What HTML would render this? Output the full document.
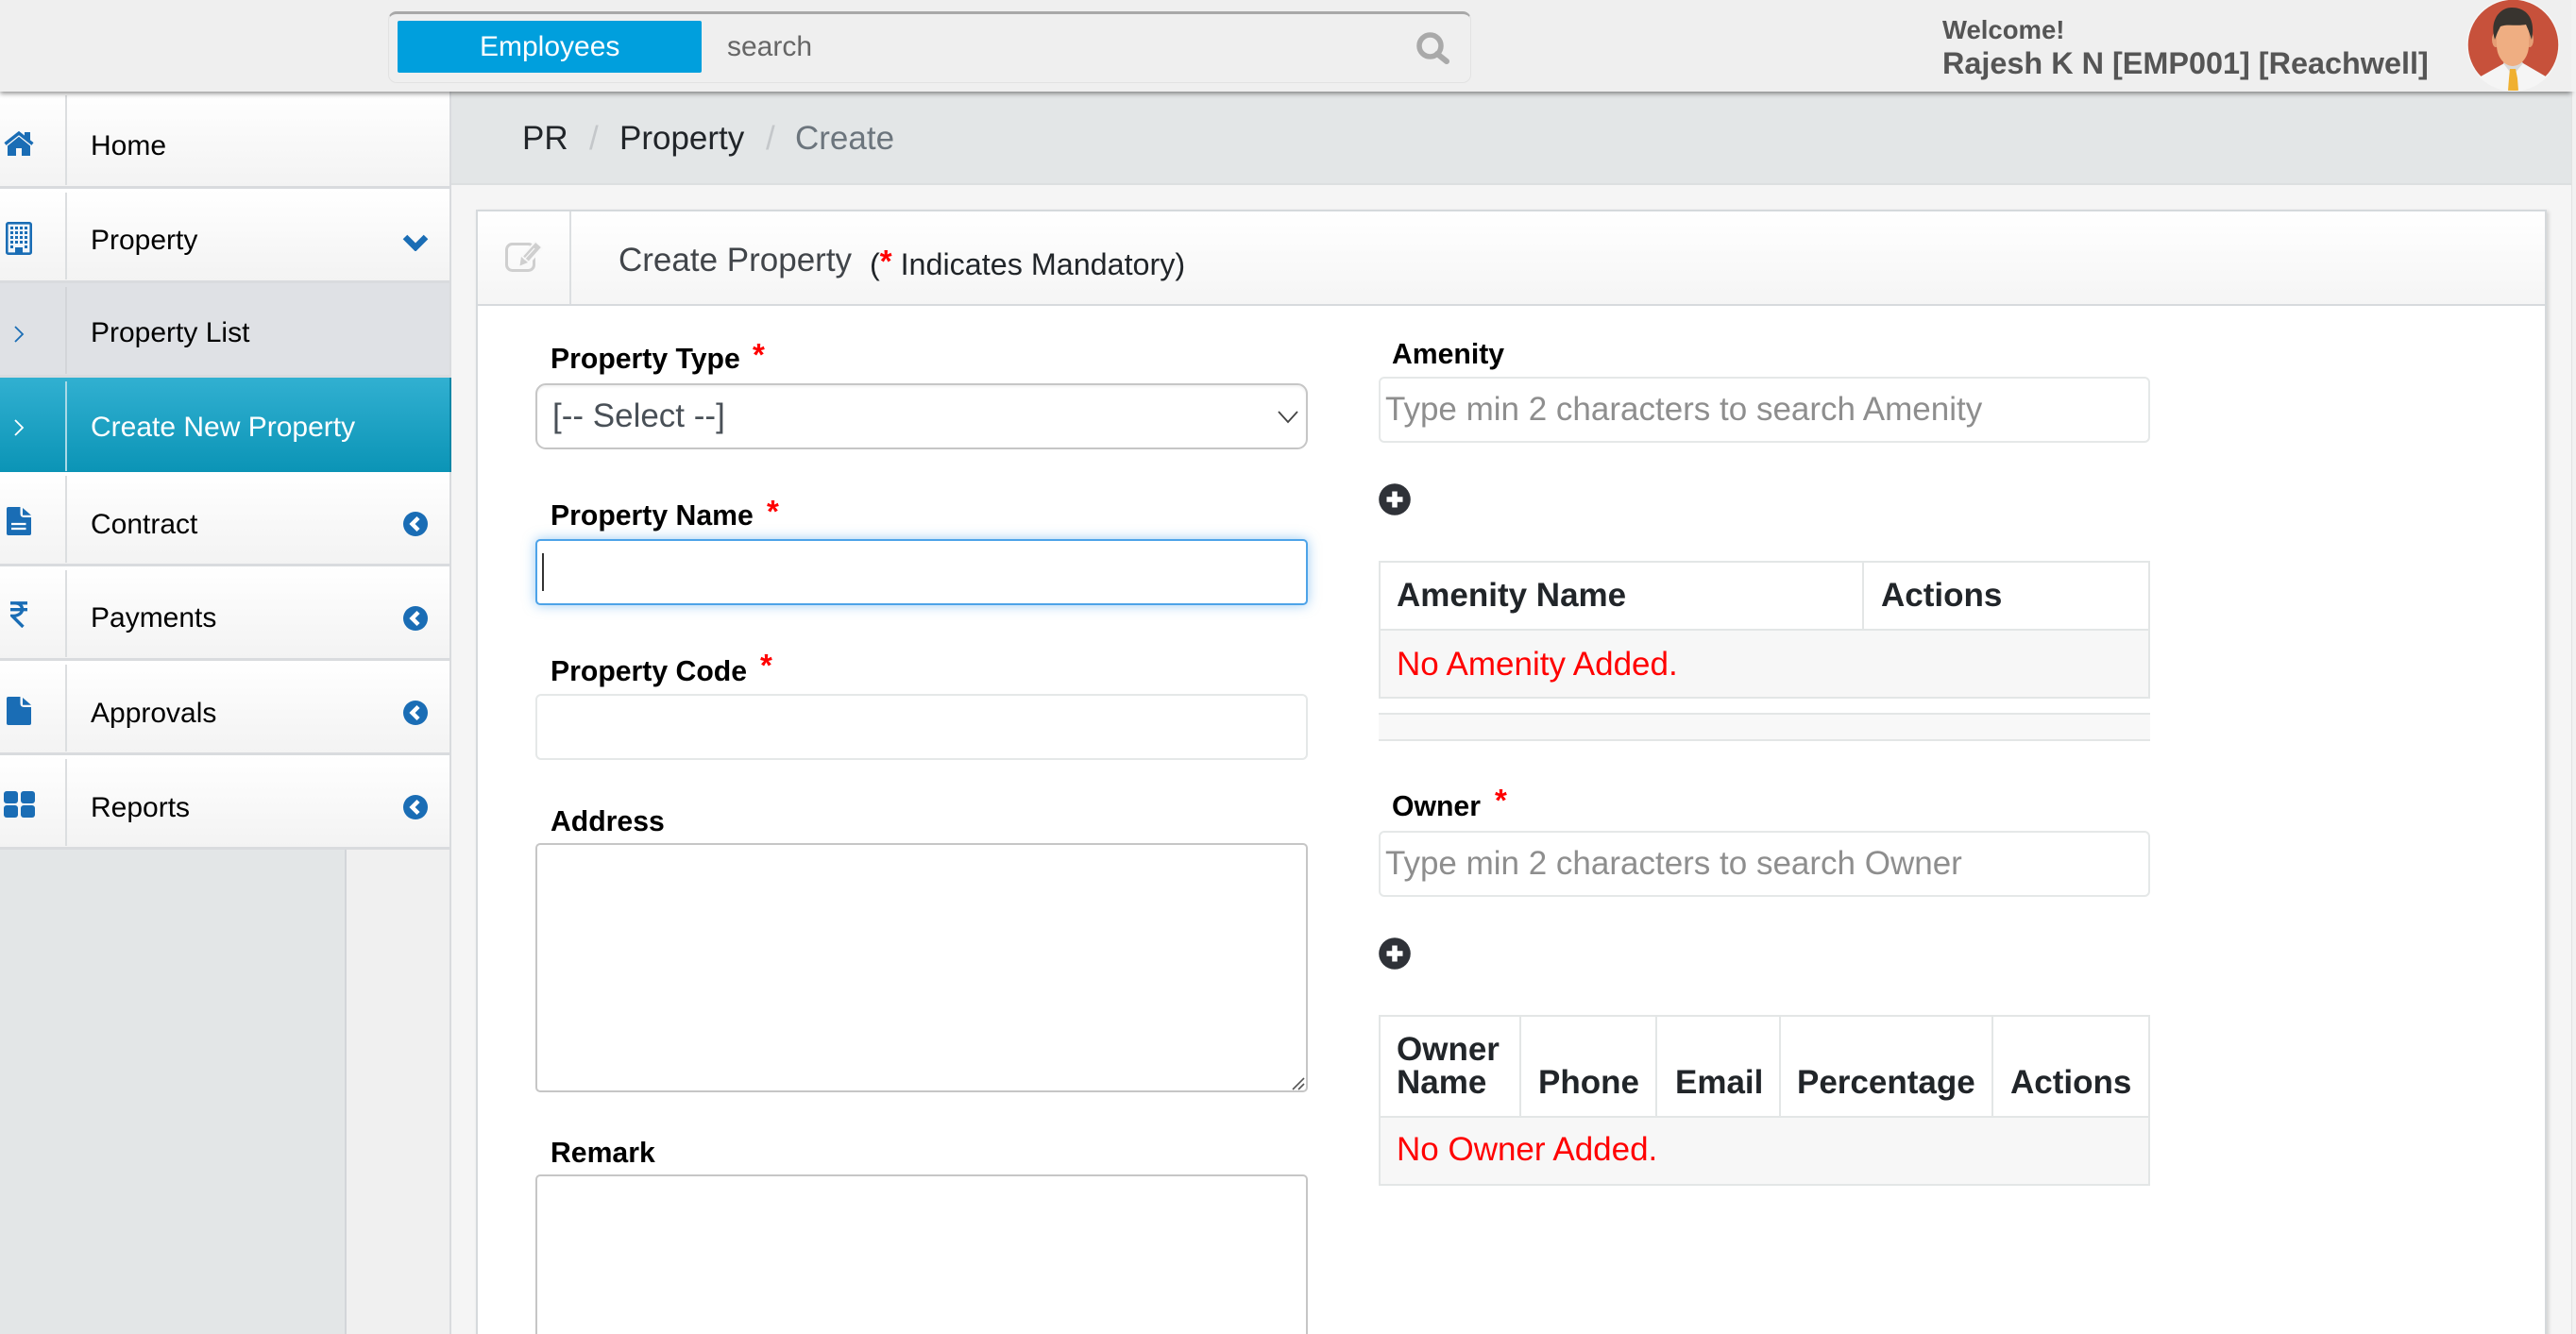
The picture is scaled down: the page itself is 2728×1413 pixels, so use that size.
<!DOCTYPE html>
<html lang="en">
<head>
<meta charset="utf-8">
<title>Create Property</title>
<style>
html,body{margin:0;padding:0;width:2728px;height:1413px;overflow:hidden;background:#f5f5f5;font-family:"Liberation Sans",Arial,sans-serif}
*{box-sizing:border-box}
#page{position:relative;width:2728px;height:1413px;overflow:hidden;background:#f5f5f5}
.a{position:absolute}
.t{position:absolute;white-space:nowrap;line-height:0}
.f30{font-size:30px;margin-top:-10.4px}
.f35{font-size:35px;margin-top:-11px}
.bc{font-size:35px;margin-top:-10.6px}
.lb{font-size:30.2px;margin-top:-9.5px;font-weight:700;color:#000}
.th{font-size:35px;margin-top:-11.4px;font-weight:700;color:#212529}
.star{position:absolute;white-space:nowrap;line-height:0;color:#f00;font-size:33px;margin-top:-9.5px;font-weight:700}
.ph{color:#8e8e8e}
.item{position:absolute;left:0;width:478px;height:100px;background:linear-gradient(#fff,#f3f3f3);border-bottom:3px solid #d9dbde;border-right:2px solid #d9dbde}
.item i{position:absolute;left:69px;top:4px;bottom:1px;width:2px;background:#dcdee0}
.in{position:absolute;background:#fff;border:2px solid #e5e8e8;border-radius:6px}
.tx{position:absolute;background:#fff;border:2px solid #c6c6c6;border-radius:5px}
.c{position:absolute;background:#e3e6e6}
svg{position:absolute;display:block}
</style>
</head>
<body>
<div id="page">

<!-- content background -->
<div class="a" style="left:478px;top:97px;width:2245px;height:99px;background:#e3e6e7;border-bottom:2px solid #dcdfe0"></div>
<div class="t bc" style="left:553px;top:158px;color:#212529">PR</div>
<div class="t bc" style="left:624px;top:158px;color:#c4c7ca">/</div>
<div class="t bc" style="left:656px;top:158px;color:#212529">Property</div>
<div class="t bc" style="left:811px;top:158px;color:#c4c7ca">/</div>
<div class="t bc" style="left:842px;top:158px;color:#6c757d">Create</div>
<div class="a" style="left:2723px;top:97px;width:5px;height:1316px;background:#f2f2f2;border-left:1px solid #e2e2e2"></div>

<!-- panel -->
<div class="a" style="left:504px;top:222px;width:2193px;height:1200px;background:#fff;border:2px solid #d5d9dc;box-shadow:2px 2px 4px rgba(0,0,0,.15)"></div>
<div class="a" style="left:506px;top:224px;width:2189px;height:100px;background:linear-gradient(#fff,#f5f5f5);border-bottom:2px solid #d7dadd"></div>
<div class="a" style="left:603px;top:224px;width:2px;height:98px;background:#dcdfe1"></div>
<svg style="left:533px;top:255px" width="44" height="34" viewBox="0 0 44 34">
  <rect x="3.5" y="3.5" width="29" height="28" rx="6" fill="none" stroke="#cfcfcf" stroke-width="3"/>
  <path d="M22 22 L38 4" stroke="#f9f9f9" stroke-width="12"/>
  <path d="M24 19 L37 4.5" stroke="#cfcfcf" stroke-width="7.5"/>
  <path d="M17.5 26.5 L19 17 L26 23 Z" fill="#cfcfcf"/>
  <path d="M22 20 L33 8" stroke="#f9f9f9" stroke-width="1.2"/>
</svg>
<div class="t f35" style="left:655px;top:287px;color:#41454a">Create Property</div>
<div class="t" style="left:921px;top:290px;font-size:32.3px;margin-top:-10.2px;color:#212529">(<span style="color:#f00;font-size:33px;font-weight:700;position:relative;top:-3px">*</span> Indicates Mandatory)</div>

<!-- left form column -->
<div class="t lb" style="left:583px;top:390px">Property Type</div>
<div class="star" style="left:797px;top:385px">*</div>
<div class="tx" style="left:567px;top:406px;width:818px;height:70px;border-radius:11px;box-shadow:inset 0 2px 2px rgba(0,0,0,.05)"></div>
<div class="t f35" style="left:585px;top:452px;color:#495057">[-- Select --]</div>
<svg style="left:1352px;top:434px" width="24" height="15" viewBox="0 0 24 15"><path d="M2 2 L12 13 L22 2" fill="none" stroke="#444" stroke-width="1.8"/></svg>

<div class="t lb" style="left:583px;top:556px">Property Name</div>
<div class="star" style="left:812px;top:551px">*</div>
<div class="a" style="left:567px;top:571px;width:818px;height:70px;background:#fff;border:2px solid #4da3e8;border-radius:5px;box-shadow:0 0 13px rgba(77,163,232,.55)"></div>
<div class="a" style="left:574px;top:586px;width:2px;height:40px;background:#333"></div>

<div class="t lb" style="left:583px;top:721px">Property Code</div>
<div class="star" style="left:805px;top:714px">*</div>
<div class="in" style="left:567px;top:735px;width:818px;height:70px"></div>

<div class="t lb" style="left:583px;top:880px">Address</div>
<div class="tx" style="left:567px;top:893px;width:818px;height:264px"></div>
<svg style="left:1366px;top:1139px" width="17" height="17" viewBox="0 0 17 17"><path d="M3 15 L15 3 M9 15 L15 9" stroke="#555" stroke-width="1.6"/></svg>

<div class="t lb" style="left:583px;top:1231px">Remark</div>
<div class="tx" style="left:567px;top:1244px;width:818px;height:200px"></div>

<!-- right column: amenity -->
<div class="t lb" style="left:1474px;top:385px">Amenity</div>
<div class="in" style="left:1460px;top:399px;width:817px;height:70px"></div>
<div class="t f35 ph" style="left:1467px;top:445px">Type min 2 characters to search Amenity</div>
<svg style="left:1460px;top:512px" width="34" height="34" viewBox="0 0 34 34"><circle cx="17" cy="17" r="16.8" fill="#2f3238"/><path d="M17 8.5 V25.5 M8.5 17 H25.5" stroke="#fff" stroke-width="5.5"/></svg>

<div class="a" style="left:1460px;top:594px;width:817px;height:146px;background:#fff;border:2px solid #e3e6e6"></div>
<div class="a" style="left:1462px;top:668px;width:813px;height:70px;background:#f7f7f7"></div>
<div class="c" style="left:1462px;top:666px;width:813px;height:2px"></div>
<div class="c" style="left:1972px;top:596px;width:2px;height:70px"></div>
<div class="t th" style="left:1479px;top:642px">Amenity Name</div>
<div class="t th" style="left:1992px;top:642px">Actions</div>
<div class="t f35" style="left:1479px;top:715px;color:#f00">No Amenity Added.</div>
<div class="a" style="left:1460px;top:755px;width:817px;height:30px;background:#f8f8f8;border-top:2px solid #e3e6e6;border-bottom:2px solid #e3e6e6"></div>

<!-- right column: owner -->
<div class="t lb" style="left:1474px;top:864px">Owner</div>
<div class="star" style="left:1583px;top:857px">*</div>
<div class="in" style="left:1460px;top:880px;width:817px;height:70px"></div>
<div class="t f35 ph" style="left:1467px;top:926px">Type min 2 characters to search Owner</div>
<svg style="left:1460px;top:993px" width="34" height="34" viewBox="0 0 34 34"><circle cx="17" cy="17" r="16.8" fill="#2f3238"/><path d="M17 8.5 V25.5 M8.5 17 H25.5" stroke="#fff" stroke-width="5.5"/></svg>

<div class="a" style="left:1460px;top:1075px;width:817px;height:181px;background:#fff;border:2px solid #e3e6e6"></div>
<div class="a" style="left:1462px;top:1184px;width:813px;height:70px;background:#f7f7f7"></div>
<div class="c" style="left:1462px;top:1182px;width:813px;height:2px"></div>
<div class="c" style="left:1609px;top:1077px;width:2px;height:105px"></div>
<div class="c" style="left:1753px;top:1077px;width:2px;height:105px"></div>
<div class="c" style="left:1884px;top:1077px;width:2px;height:105px"></div>
<div class="c" style="left:2109px;top:1077px;width:2px;height:105px"></div>
<div class="t th" style="left:1479px;top:1123px">Owner</div>
<div class="t th" style="left:1479px;top:1158px">Name</div>
<div class="t th" style="left:1629px;top:1158px">Phone</div>
<div class="t th" style="left:1774px;top:1158px">Email</div>
<div class="t th" style="left:1903px;top:1158px">Percentage</div>
<div class="t th" style="left:2129px;top:1158px">Actions</div>
<div class="t f35" style="left:1479px;top:1229px;color:#f00">No Owner Added.</div>

<!-- sidebar -->
<div class="a" style="left:0;top:97px;width:478px;height:1316px;background:#f0f0f0;border-right:2px solid #d9dbde"></div>
<div class="a" style="left:0;top:900px;width:367px;height:513px;background:#e3e6e7;border-right:2px solid #d3d6d9"></div>

<div class="item" style="top:97px;height:103px"><i></i></div>
<div class="item" style="top:200px"><i></i></div>
<div class="item" style="top:300px;background:#dfe1e5"><i style="background:#d3d5d9"></i></div>
<div class="item" style="top:400px;background:linear-gradient(#31b0d1,#0b94b6);border-bottom:none;border-right:2px solid #0e86a6"><i style="background:#a9d9e6"></i></div>
<div class="item" style="top:500px"><i></i></div>
<div class="item" style="top:600px"><i></i></div>
<div class="item" style="top:700px"><i></i></div>
<div class="item" style="top:800px"><i></i></div>

<div class="t f30" style="left:96px;top:165px;color:#000">Home</div>
<div class="t f30" style="left:96px;top:265px;color:#000">Property</div>
<div class="t f30" style="left:96px;top:363px;color:#000">Property List</div>
<div class="t f30" style="left:96px;top:463px;color:#fff">Create New Property</div>
<div class="t f30" style="left:96px;top:566px;color:#000">Contract</div>
<div class="t f30" style="left:96px;top:665px;color:#000">Payments</div>
<div class="t f30" style="left:96px;top:766px;color:#000">Approvals</div>
<div class="t f30" style="left:96px;top:866px;color:#000">Reports</div>

<!-- sidebar icons -->
<svg style="left:4px;top:139px" width="32" height="26" viewBox="0 0 32 26" fill="#1a6db5">
  <path d="M1.5 13.5 L16 2 L30.5 13.5" fill="none" stroke="#1a6db5" stroke-width="3.4"/>
  <rect x="22" y="1" width="6" height="8"/>
  <path d="M4 15.5 L16 5.8 L28 15.5 V26 H19 V18 H13 V26 H4 Z"/>
</svg>
<svg style="left:6px;top:235px" width="28" height="35" viewBox="0 0 28 35">
  <rect x="1.3" y="1.3" width="25.4" height="32.4" rx="1.5" fill="#f2f6fa" stroke="#1a6db5" stroke-width="2.6"/>
  <g fill="#1a6db5">
    <rect x="5" y="5" width="3" height="3"/><rect x="10" y="5" width="3" height="3"/><rect x="15" y="5" width="3" height="3"/><rect x="20" y="5" width="3" height="3"/>
    <rect x="5" y="10" width="3" height="3"/><rect x="10" y="10" width="3" height="3"/><rect x="15" y="10" width="3" height="3"/><rect x="20" y="10" width="3" height="3"/>
    <rect x="5" y="15" width="3" height="3"/><rect x="10" y="15" width="3" height="3"/><rect x="15" y="15" width="3" height="3"/><rect x="20" y="15" width="3" height="3"/>
    <rect x="5" y="20" width="3" height="3"/><rect x="10" y="20" width="3" height="3"/><rect x="15" y="20" width="3" height="3"/><rect x="20" y="20" width="3" height="3"/>
    <rect x="5" y="25" width="3" height="3"/><rect x="20" y="25" width="3" height="3"/>
    <rect x="10" y="27" width="8" height="8"/>
  </g>
</svg>
<svg style="left:426px;top:248px" width="28" height="18" viewBox="0 0 28 18"><path d="M3 3 L14 14 L25 3" fill="none" stroke="#1a6db5" stroke-width="6.5"/></svg>
<svg style="left:14px;top:345px" width="12" height="18" viewBox="0 0 12 18"><path d="M2 1 L10 9 L2 17" fill="none" stroke="#1a6db5" stroke-width="1.8"/></svg>
<svg style="left:14px;top:444px" width="12" height="18" viewBox="0 0 12 18"><path d="M2 1 L10 9 L2 17" fill="none" stroke="#fff" stroke-width="1.8"/></svg>
<svg style="left:7px;top:537px" width="26" height="30" viewBox="0 0 26 30" fill="#1a6db5">
  <path d="M2 0 H14.5 V7 Q14.5 11 18.5 11 H26 V28 A2 2 0 0 1 24 30 H2 A2 2 0 0 1 0 28 V2 A2 2 0 0 1 2 0 Z"/>
  <path d="M17 1 L26 8.7 H17 Z"/>
  <path d="M5 18 H20.5 M5 23 H20.5" stroke="#fff" stroke-width="2.2"/>
</svg>
<svg style="left:11px;top:637px" width="18" height="28" viewBox="0 0 18 28"><path d="M0 1.8 H18 M0 8.7 H18 M2 1.8 H5 C10 1.8 12.5 5 12.5 8.5 C12.5 12 9 15.5 2 15.5 L13.5 27" fill="none" stroke="#1a6db5" stroke-width="3.4"/></svg>
<svg style="left:7px;top:738px" width="26" height="30" viewBox="0 0 26 30" fill="#1a6db5">
  <path d="M2 0 H14.5 V7 Q14.5 11 18.5 11 H26 V28 A2 2 0 0 1 24 30 H2 A2 2 0 0 1 0 28 V2 A2 2 0 0 1 2 0 Z"/>
  <path d="M17 1 L26 8.7 H17 Z"/>
</svg>
<svg style="left:4px;top:838px" width="33" height="28" viewBox="0 0 33 28" fill="#1a6db5">
  <rect x="0" y="0" width="15" height="13" rx="3"/><rect x="18" y="0" width="15" height="13" rx="3"/>
  <rect x="0" y="15" width="15" height="13" rx="3"/><rect x="18" y="15" width="15" height="13" rx="3"/>
</svg>
<svg style="left:427px;top:542px" width="26" height="26" viewBox="0 0 26 26"><circle cx="13" cy="13" r="13" fill="#1a6db5"/><path d="M16 6.5 L9.5 13 L16 19.5" fill="none" stroke="#fff" stroke-width="4.4"/></svg>
<svg style="left:427px;top:642px" width="26" height="26" viewBox="0 0 26 26"><circle cx="13" cy="13" r="13" fill="#1a6db5"/><path d="M16 6.5 L9.5 13 L16 19.5" fill="none" stroke="#fff" stroke-width="4.4"/></svg>
<svg style="left:427px;top:742px" width="26" height="26" viewBox="0 0 26 26"><circle cx="13" cy="13" r="13" fill="#1a6db5"/><path d="M16 6.5 L9.5 13 L16 19.5" fill="none" stroke="#fff" stroke-width="4.4"/></svg>
<svg style="left:427px;top:842px" width="26" height="26" viewBox="0 0 26 26"><circle cx="13" cy="13" r="13" fill="#1a6db5"/><path d="M16 6.5 L9.5 13 L16 19.5" fill="none" stroke="#fff" stroke-width="4.4"/></svg>

<!-- header -->
<div class="a" style="left:0;top:0;width:2723px;height:97px;background:#efefef;box-shadow:0 2px 5px rgba(0,0,0,.45)"></div>
<div class="a" style="left:2723px;top:0;width:5px;height:97px;background:#f2f2f2"></div>
<div class="a" style="left:411px;top:12px;width:1147px;height:76px;border:1px solid #e2e2e2;border-top:3px solid #a8a8a8;border-radius:9px;background:#efefef"></div>
<div class="a" style="left:421px;top:22px;width:322px;height:55px;background:#009fdd;border-radius:2px"></div>
<div class="t f30" style="left:508px;top:60px;color:#fff">Employees</div>
<div class="t f30" style="left:770px;top:60px;color:#666">search</div>
<svg style="left:1500px;top:34px" width="35" height="34" viewBox="0 0 35 34"><circle cx="14.5" cy="14.5" r="11.5" fill="none" stroke="#a9a9a9" stroke-width="5.5"/><path d="M22 23 L32 31" stroke="#a9a9a9" stroke-width="6" stroke-linecap="round"/></svg>
<div class="t" style="left:2057px;top:41px;font-size:27.5px;margin-top:-9.5px;font-weight:700;color:#555">Welcome!</div>
<div class="t" style="left:2057px;top:78px;font-size:32.4px;margin-top:-11.2px;font-weight:700;color:#555">Rajesh K N [EMP001] [Reachwell]</div>
<svg style="left:2610px;top:0" width="102" height="98" viewBox="2610 0 102 98">
  <defs><clipPath id="av"><circle cx="2661.5" cy="47.5" r="48.5"/></clipPath></defs>
  <circle cx="2661.5" cy="47.5" r="48.5" fill="#c7513b" stroke="#f5f5f5" stroke-width="1.5"/>
  <g clip-path="url(#av)">
    <path d="M2627 81 L2652 67 H2672 L2696 81 V100 H2627 Z" fill="#f5f5f5"/>
    <path d="M2651 67 L2661 80 L2672 67 L2667 60 H2656 Z" fill="#d9d9d9"/>
    <ellipse cx="2643" cy="42" rx="4" ry="8" fill="#e59e75"/>
    <ellipse cx="2679" cy="42" rx="4" ry="8" fill="#e59e75"/>
    <path d="M2644 24 H2678 V48 C2678 60 2670 70 2661 70 C2652 70 2644 60 2644 48 Z" fill="#efae82"/>
    <path d="M2642 42 C2636 22 2647 8 2660 8 C2674 8 2686 18 2681 42 L2678 33 L2675 26 C2665 28 2655 25 2648 28 L2645 34 Z" fill="#38342f"/>
    <path d="M2658 73 H2664 L2666 83 L2667 96 H2656 L2657 83 Z" fill="#f0b030"/>
  </g>
</svg>

</div>
</body>
</html>
